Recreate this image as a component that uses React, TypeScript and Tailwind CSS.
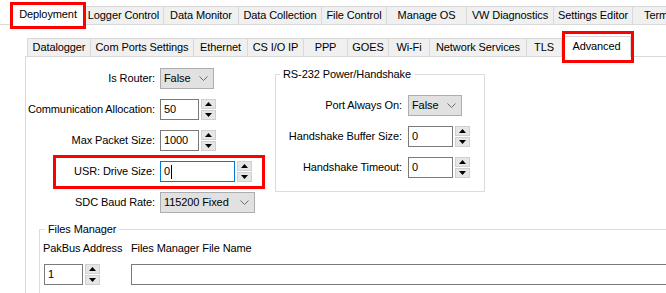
import React from "react";

type TabDef = { label: string; w: string; active?: boolean };

const topTabs: TabDef[] = [
  { label: "Deployment", w: "w-[72px]", active: true },
  { label: "Logger Control", w: "w-[80px]" },
  { label: "Data Monitor", w: "w-[75px]" },
  { label: "Data Collection", w: "w-[83px]" },
  { label: "File Control", w: "w-[65px]" },
  { label: "Manage OS", w: "w-[80px]" },
  { label: "VW Diagnostics", w: "w-[87px]" },
  { label: "Settings Editor", w: "w-[79px]" },
  { label: "Terminal Emulator", w: "w-[110px]" },
];

const subTabs: TabDef[] = [
  { label: "Datalogger", w: "w-[64px]" },
  { label: "Com Ports Settings", w: "w-[103px]" },
  { label: "Ethernet", w: "w-[54px]" },
  { label: "CS I/O IP", w: "w-[56px]" },
  { label: "PPP", w: "w-[44px]" },
  { label: "GOES", w: "w-[41px]" },
  { label: "Wi-Fi", w: "w-[41px]" },
  { label: "Network Services", w: "w-[97px]" },
  { label: "TLS", w: "w-[35px]" },
  { label: "Advanced", w: "w-[69px]", active: true },
];

function Tab({ tab, first, mark }: { tab: TabDef; first?: boolean; mark?: string }) {
  if (tab.active) {
    return (
      <div className={`relative z-10 -mb-px flex h-[21px] shrink-0 items-center justify-center border-x border-t border-[#d9d9d9] bg-white pb-[2px] ${tab.w}`}>
        {tab.label}
        {mark && <div className={`pointer-events-none absolute border-[3px] border-[#ff0000] ${mark}`} />}
      </div>
    );
  }
  return (
    <div className={`flex h-[18px] shrink-0 items-center justify-center whitespace-nowrap border-r border-t border-[#d9d9d9] bg-[#f0f0f0] ${first ? "border-l" : ""} ${tab.w}`}>
      {tab.label}
    </div>
  );
}

function Chevron() {
  return (
    <svg width="9" height="5" viewBox="0 0 9 5" className="shrink-0">
      <polyline points="0.5,0.5 4.5,4.5 8.5,0.5" fill="none" stroke="#6b6b6b" strokeWidth="1" />
    </svg>
  );
}

function Select({ value, w }: { value: string; w: string }) {
  return (
    <div className={`flex h-[21px] items-center justify-between border border-[#adadad] bg-[#e1e1e1] pl-[3px] pr-[5px] ${w}`}>
      <span>{value}</span>
      <Chevron />
    </div>
  );
}

function Spinner() {
  return (
    <div className="ml-[2px] flex h-[21px] w-[15px] flex-col justify-between">
      <div className="flex h-[10px] items-center justify-center border border-[#cfcfcf] bg-[#e6e6e6]">
        <svg width="7" height="4" viewBox="0 0 7 4">
          <polygon points="0,4 7,4 3.5,0" fill="#000" />
        </svg>
      </div>
      <div className="flex h-[10px] items-center justify-center border border-[#cfcfcf] bg-[#e6e6e6]">
        <svg width="7" height="4" viewBox="0 0 7 4">
          <polygon points="0,0 7,0 3.5,4" fill="#000" />
        </svg>
      </div>
    </div>
  );
}

function NumInput({ value, w, focused }: { value: string; w: string; focused?: boolean }) {
  return (
    <div className="flex items-center">
      <div className={`flex h-[21px] items-center border bg-white pl-[3px] ${focused ? "border-[#0078d7]" : "border-[#7a7a7a]"} ${w}`}>
        <span>{value}</span>
        {focused && <span className="ml-[1px] h-[14px] w-px bg-black" />}
      </div>
      <Spinner />
    </div>
  );
}

export default function App() {
  return (
    <div className="relative h-[293px] w-[666px] overflow-hidden bg-white font-['Liberation_Sans',Arial,sans-serif] text-[11px] leading-[13px] tracking-[-0.1px] text-black">
      {/* main tabs */}
      <div className="flex h-[25px] items-end border-b border-[#d9d9d9] pl-[12px]">
        {topTabs.map((t, i) => (
          <Tab key={t.label} tab={t} first={i === 0} mark="-left-[3px] -right-[3px] -top-[3px] -bottom-[4px]" />
        ))}
      </div>

      {/* sub tabs */}
      <div className="ml-[25px] mt-[11px] flex h-[21px] items-end border-b border-[#d9d9d9] pl-[2px]">
        {subTabs.map((t, i) => (
          <Tab key={t.label} tab={t} first={i === 0} mark="-left-[1px] -right-[4px] -top-[6px] -bottom-[6px]" />
        ))}
      </div>

      <div className="ml-[25px] h-[240px] border-l border-[#d9d9d9]">
        <div className="flex items-start">
          <div className="flex w-[249px] shrink-0 flex-col gap-[10px] pt-[11px]">
            <div className="flex h-[21px] items-center gap-[5px]">
              <span className="w-[129px] text-right">Is Router:</span>
              <Select value="False" w="w-[54px]" />
            </div>
            <div className="flex h-[21px] items-center gap-[5px]">
              <span className="w-[129px] whitespace-nowrap text-right">Communication Allocation:</span>
              <NumInput value="50" w="w-[39px]" />
            </div>
            <div className="flex h-[21px] items-center gap-[5px]">
              <span className="w-[129px] text-right">Max Packet Size:</span>
              <NumInput value="1000" w="w-[39px]" />
            </div>
            <div className="relative flex h-[21px] items-center gap-[5px]">
              <span className="w-[129px] text-right">USR: Drive Size:</span>
              <NumInput value="0" w="w-[75px]" focused />
              <div className="pointer-events-none absolute left-[27px] top-[-6px] h-[34px] w-[212px] border-[3px] border-[#ff0000]" />
            </div>
            <div className="flex h-[21px] items-center gap-[5px]">
              <span className="w-[129px] text-right">SDC Baud Rate:</span>
              <Select value="115200 Fixed" w="w-[95px]" />
            </div>
          </div>

          <fieldset className="mt-[11px] h-[124px] w-[210px] shrink-0 border border-[#dcdcdc]">
            <legend className="ml-[4px] px-[3px]">RS-232 Power/Handshake</legend>
            <div className="flex flex-col gap-[10px] pt-[14px]">
              <div className="flex h-[21px] items-center gap-[6px]">
                <span className="w-[126px] whitespace-nowrap text-right">Port Always On:</span>
                <Select value="False" w="w-[54px]" />
              </div>
              <div className="flex h-[21px] items-center gap-[6px]">
                <span className="w-[126px] whitespace-nowrap text-right">Handshake Buffer Size:</span>
                <NumInput value="0" w="w-[45px]" />
              </div>
              <div className="flex h-[21px] items-center gap-[6px]">
                <span className="w-[126px] whitespace-nowrap text-right">Handshake Timeout:</span>
                <NumInput value="0" w="w-[45px]" />
              </div>
            </div>
          </fieldset>
        </div>

        <fieldset className="ml-[13px] mt-[10px] h-[100px] w-[700px] border border-[#dcdcdc]">
          <legend className="ml-[5px] px-[3px]">Files Manager</legend>
          <div className="flex pl-[3px] pt-[6px]">
            <div className="flex w-[88px] shrink-0 flex-col gap-[9px]">
              <span className="whitespace-nowrap">PakBus Address</span>
              <div className="pl-[1px]">
                <NumInput value="1" w="w-[39px]" />
              </div>
            </div>
            <div className="flex flex-1 flex-col gap-[9px]">
              <span className="whitespace-nowrap">Files Manager File Name</span>
              <div className="h-[21px] w-full border border-[#7a7a7a] bg-white" />
            </div>
          </div>
        </fieldset>
      </div>
    </div>
  );
}
